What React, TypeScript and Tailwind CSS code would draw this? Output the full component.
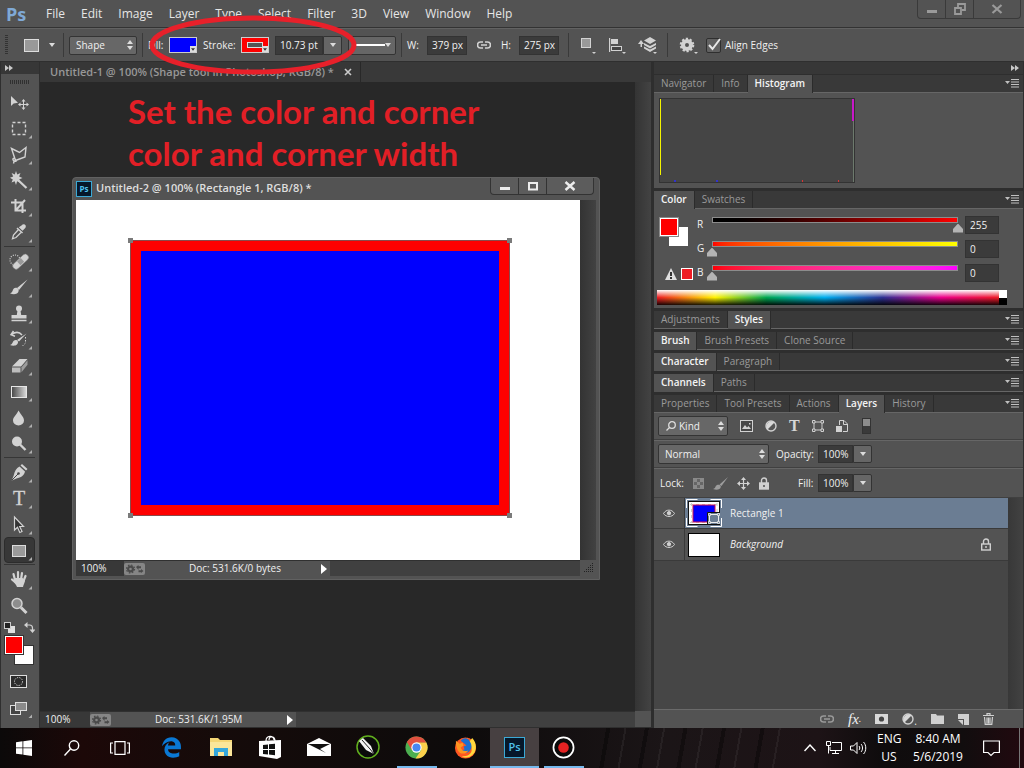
import type { ReactNode } from "react"
import { FaEdgeLegacy } from "react-icons/fa6"

const GRAY = "#d2d2d2"

const menus = ["File", "Edit", "Image", "Layer", "Type", "Select", "Filter", "3D", "View", "Window", "Help"]

type Tool = { name: string; icon: ReactNode; single?: boolean; active?: boolean }

const marqueeTools: Tool[] = [
  {
    name: "Move",
    single: true,
    icon: (
      <>
        <path d="M7 7v10l2.600-2.600 4.400-.6z" />
        <path d="M19.500 11v9M15 15.500h9" stroke={GRAY} strokeWidth="1" />
        <path d="M19.500 10l2 2.500h-4zM19.500 21l2-2.500h-4zM14 15.500l2.500-2v4zM25 15.500l-2.500-2v4z" />
      </>
    ),
  },
  {
    name: "Rectangular marquee",
    icon: <rect x="8.500" y="7.500" width="13" height="12" fill="none" stroke={GRAY} strokeWidth="1.400" strokeDasharray="3 2" />,
  },
  {
    name: "Lasso",
    icon: (
      <path d="M7.500 7.500l8 4 6.500-5-1 9.500-9.500 3.500zM11.500 18c-2-1.500-3.500 0-2 1.500s3 1 3-.5M10 20.500l-.5 2" fill="none" stroke={GRAY} strokeWidth="1.400" />
    ),
  },
  {
    name: "Magic wand",
    icon: (
      <>
        <path d="M12 4l1.200 3.600L16.500 6l-1.400 3.400L18.500 11l-3.400 1.400 1 3-3-1.200L12 18l-1.300-3.800-3.200 1.200 1.300-3L6 10.800l3.200-1.400L7.600 6l3.200 1.500z" />
        <path d="M14 13l8.500 8" stroke={GRAY} strokeWidth="2.200" />
      </>
    ),
  },
  {
    name: "Crop",
    icon: (
      <path d="M11.500 6v11.500H22M7 9.500h11.500V20M12 17l9-10" fill="none" stroke={GRAY} strokeWidth="2" />
    ),
  },
  {
    name: "Eyedropper",
    icon: (
      <>
        <path d="M17.500 6.500c2-2.500 5.500-.5 4 2.200l-3 3-3.700-3.500zM13.500 8.500l5.500 5-1 1-5.500-5z" />
        <path d="M14.500 10.500L9.500 16l-1 3.800 3.500-1.300 5-5" fill="none" stroke={GRAY} strokeWidth="1.300" />
      </>
    ),
  },
]

const paintTools: Tool[] = [
  {
    name: "Spot healing brush",
    icon: (
      <>
        <circle cx="11" cy="12" r="5" fill="none" stroke={GRAY} strokeWidth="1.200" strokeDasharray="1 1.300" />
        <rect x="7" y="10.500" width="19" height="6.500" rx="3" transform="rotate(-43 16.500 13.500)" stroke="#777" strokeWidth="0.500" />
        <rect x="14" y="11.200" width="5" height="5" transform="rotate(-43 16.500 13.500)" fill="#999" />
      </>
    ),
  },
  {
    name: "Brush",
    icon: (
      <>
        <path d="M23.500 5.500L15 16l-2-2z" />
        <path d="M12.500 13.800c2 .6 3 2.500 1.500 4.700s-5.500 2-8 .8c2-.5 2.300-1.700 3-3.500.6-1.600 2-2.400 3.500-2z" />
      </>
    ),
  },
  {
    name: "Clone stamp",
    icon: (
      <>
        <circle cx="15" cy="8.500" r="3" />
        <path d="M13.600 10h2.800l.8 5h5.300v3.500h-15V15h5.300zM7.500 19.800h15v1.400h-15z" />
      </>
    ),
  },
  {
    name: "History brush",
    icon: (
      <>
        <path d="M7.500 8.500c5-3.500 8-2.500 10.500.5M9.500 5L7 8.700l4 1.500" fill="none" stroke={GRAY} strokeWidth="1.500" />
        <path d="M22.500 7.500L15 15.500l-2-1.500zM12.500 14c2 1 2 3 .5 4.500s-4.500 1.500-7 .5c2-.5 2-1.500 3-3.200.8-1.500 2-2.200 3.500-1.800z" />
        <path d="M21.500 11v6l-3 3" fill="none" stroke={GRAY} strokeDasharray="1.500 1.500" />
      </>
    ),
  },
  {
    name: "Eraser",
    icon: (
      <>
        <path d="M8 14.500L15.500 7h8L17 14.500z" />
        <path d="M8 15.500h8.500v5H8z" fill="#bdbdbd" />
        <path d="M17.500 15.200l6-7v4.500l-6 7.500z" fill="#9c9c9c" />
      </>
    ),
  },
  {
    name: "Gradient",
    icon: (
      <>
        <defs>
          <linearGradient id="ramp">
            <stop offset="0" stopColor="#444" />
            <stop offset="1" stopColor="#ddd" />
          </linearGradient>
        </defs>
        <rect x="7.500" y="8.500" width="15" height="11" fill="url(#ramp)" stroke="#e6e6e6" />
      </>
    ),
  },
  {
    name: "Blur",
    icon: <path d="M14.500 6.500c2.500 4.500 5.500 6.500 5.500 10a5.500 5 0 0 1-11 0c0-3.500 3.500-5.500 5.500-10z" />,
  },
  {
    name: "Dodge",
    icon: (
      <>
        <circle cx="13" cy="11.500" r="5" />
        <path d="M16 14.500l5.500 5.500" stroke={GRAY} strokeWidth="2.400" />
      </>
    ),
  },
]

const vectorTools: Tool[] = [
  {
    name: "Pen",
    icon: (
      <>
        <path d="M18 5l5.500 5-1.500 1.500-5.500-5zM15.500 7.500l5.500 5c-1 4-4 6-8.500 7l-4.800 2 2-5c1-4.500 2.500-7.500 5.800-9z" />
        <path d="M8 21l6-6" stroke="#444" />
        <circle cx="14.500" cy="14.500" r="1.300" fill="#444" />
      </>
    ),
  },
  {
    name: "Type",
    icon: (
      <text x="15" y="20" textAnchor="middle" fontFamily="Liberation Serif, serif" fontSize="20" stroke={GRAY} strokeWidth="0.300">
        T
      </text>
    ),
  },
  {
    name: "Path selection",
    icon: (
      <path d="M10.500 6v13l3-2.800 2.300 5.300 2.200-1-2.300-5h3.800z" fill="#333" stroke={GRAY} strokeWidth="1.200" />
    ),
  },
  {
    name: "Rectangle",
    active: true,
    icon: <rect x="8.500" y="8.500" width="13" height="11" fill="#9a9a9a" stroke="#dcdcdc" />,
  },
]

const viewTools: Tool[] = [
  {
    name: "Hand",
    icon: (
      <>
        <path d="M11 14L9.500 8M14 13V6M17 13.500l1-6.500M19.500 15l2-5M11.500 16.500L8 13.500" stroke={GRAY} strokeWidth="2.200" strokeLinecap="round" />
        <path d="M10.500 12h8l2.500 2.500c-.5 3-1.500 4-2 6.500h-6c-.5-2-2-3-3-5z" />
      </>
    ),
  },
  {
    name: "Zoom",
    single: true,
    icon: (
      <>
        <circle cx="13" cy="11.500" r="5" fill="#8d8d8d" stroke={GRAY} strokeWidth="1.500" />
        <path d="M17 15.500l5.500 5.500" stroke={GRAY} strokeWidth="3" />
      </>
    ),
  },
]

function ToolGroup({ tools }: { tools: Tool[] }) {
  return (
    <div className="flex flex-col">
      {tools.map((t) => (
        <button
          key={t.name}
          type="button"
          aria-label={t.name}
          className={t.active ? "h-[26px] rounded-sm border border-[#2c2c2c] bg-[#373737]" : "h-[26px] border border-transparent"}
        >
          <svg viewBox="1 1 30 24" className="h-6 w-[30px]" fill={GRAY}>
            {t.icon}
            {!t.single && <path d="M28 20v3.500h-3.500z" fill="#b0b0b0" />}
          </svg>
        </button>
      ))}
    </div>
  )
}

function Rule() {
  return <div className="my-px h-px bg-[#363636]" />
}

function Divider() {
  return <div className="mx-[5px] h-6 w-px shrink-0 bg-[#3a3a3a]" />
}

function Ps({ className }: { className: string }) {
  return (
    <span className={`flex items-center justify-center border border-[#3ba9d6] bg-[#06182a] text-[#4fc3ee] ${className}`}>
      Ps
    </span>
  )
}

function Stepper() {
  return (
    <svg viewBox="0 0 6 10" className="pointer-events-none absolute right-1 h-2.5 w-1.5" fill="#ddd">
      <path d="M3 0l3 4H0zM3 10l3-4H0z" />
    </svg>
  )
}

function Down() {
  return (
    <svg viewBox="0 0 6 4" className="h-1 w-1.5" fill="#dcdcdc">
      <path d="M0 0h6L3 4z" />
    </svg>
  )
}

function FastForward() {
  return (
    <svg viewBox="0 0 8 6" className="h-1.5 w-2" fill="#c8c8c8">
      <path d="M0 0l4 3-4 3zM4 0l4 3-4 3z" />
    </svg>
  )
}

function LinkIcon({ color }: { color: string }) {
  return (
    <svg viewBox="0 0 14 8" className="h-2 w-3.5" fill="none" stroke={color} strokeWidth="1.600">
      <path d="M6 1H3.500a2.700 2.700 0 0 0 0 6H6M8 1h2.500a2.700 2.700 0 0 1 0 6H8M4 4h6" />
    </svg>
  )
}

function MenuBar() {
  return (
    <header className="flex h-7 shrink-0 items-center border-b border-[#333] bg-[#535353]">
      <span className="w-[38px] pl-1.5 font-['Open_Sans',sans-serif] text-lg font-bold text-[#7fa9d6]">Ps</span>
      <nav className="flex flex-1 text-[12px] text-[#e6e6e6]">
        {menus.map((m) => (
          <button key={m} type="button" className="px-2">
            {m}
          </button>
        ))}
      </nav>
      <div className="mr-[3px] flex h-[19px] self-start rounded-b-sm border border-t-0 border-[#3a3a3a] text-[#9a9a9a]">
        <button type="button" aria-label="Minimize" className="flex w-7 items-center justify-center border-r border-[#3a3a3a]">
          <svg viewBox="0 0 12 12" className="size-3" fill="currentColor">
            <path d="M1 7h10v3H1z" />
          </svg>
        </button>
        <button type="button" aria-label="Restore" className="flex w-7 items-center justify-center border-r border-[#3a3a3a]">
          <svg viewBox="0 0 12 12" className="size-3" fill="none" stroke="currentColor" strokeWidth="1.800">
            <path d="M4 4V1h7v6H8M1 5h6v6H1z" />
          </svg>
        </button>
        <button type="button" aria-label="Close" className="flex w-[46px] items-center justify-center">
          <svg viewBox="0 0 12 12" className="size-3" stroke="currentColor" strokeWidth="2.200">
            <path d="M1.500 2l9 8M10.500 2l-9 8" />
          </svg>
        </button>
      </div>
    </header>
  )
}

function SwatchArrow() {
  return (
    <span className="absolute bottom-0 right-0 flex size-1.5 items-center justify-center bg-[#ddd]">
      <svg viewBox="0 0 6 4" className="h-[3px] w-1" fill="#333">
        <path d="M0 0h6L3 4z" />
      </svg>
    </span>
  )
}

function OptionsBar() {
  return (
    <div className="flex h-[34px] shrink-0 items-center border-b border-t border-b-[#2f2f2f] border-t-[#626262] bg-[#535353] text-[10px] text-[#f0f0f0]">
      <div className="ml-[5px] h-5 w-[3px] bg-[repeating-linear-gradient(#333_0_1px,transparent_1px_2px)]" />
      <button type="button" aria-label="Tool preset" className="ml-4 mr-[3px] flex items-center gap-2.5">
        <span className="h-[13px] w-[15px] border border-[#ddd] bg-[#999]" />
        <Down />
      </button>
      <Divider />
      <div className="relative flex w-[68px] items-center">
        <select aria-label="Tool mode" className="h-[19px] w-full appearance-none rounded-xs border border-[#343434] bg-[#676767] pl-1.5">
          <option>Shape</option>
        </select>
        <Stepper />
      </div>
      <Divider />
      <span className="w-[21px]">Fill:</span>
      <button type="button" aria-label="Fill color" className="relative h-4 w-7 border border-[#ccc] bg-[#0000fe]">
        <SwatchArrow />
      </button>
      <span className="ml-1.5 w-[38px]">Stroke:</span>
      <button type="button" aria-label="Stroke color" className="relative flex h-4 w-7 items-center justify-center border border-[#ccc] bg-[#fe0000]">
        <span className="h-1.5 w-4 border border-[#ddd] bg-[#555]" />
        <SwatchArrow />
      </button>
      <input aria-label="Stroke width" defaultValue="10.73 pt" className="ml-1.5 h-[19px] w-12 border border-[#333] bg-[#3b3b3b] pl-1" />
      <button type="button" aria-label="Stroke width list" className="flex h-[19px] w-[19px] items-center justify-center rounded-r-xs border border-[#333] bg-[#666]">
        <Down />
      </button>
      <button type="button" aria-label="Stroke type" className="ml-1.5 flex h-[19px] w-12 items-center justify-between rounded-xs border border-[#333] bg-[#666] px-1">
        <span className="h-0.5 w-8 bg-white" />
        <Down />
      </button>
      <Divider />
      <label htmlFor="w" className="w-5">W:</label>
      <input id="w" defaultValue="379 px" className="h-[19px] w-10 border border-[#333] bg-[#3b3b3b] pl-1" />
      <button type="button" aria-label="Link width and height" className="mx-2.5">
        <LinkIcon color={GRAY} />
      </button>
      <label htmlFor="h" className="w-[18px]">H:</label>
      <input id="h" defaultValue="275 px" className="mr-1 h-[19px] w-10 border border-[#333] bg-[#3b3b3b] pl-1" />
      <Divider />
      <button type="button" aria-label="Path operations" className="ml-1.5 w-7">
        <svg viewBox="0 0 18 20" className="h-5 w-[18px]" fill={GRAY}>
          <rect x="1.500" y="3.500" width="9" height="9" fill="#999" stroke={GRAY} />
          <path d="M12 17h4l-2 2z" />
        </svg>
      </button>
      <button type="button" aria-label="Path alignment" className="w-[30px]">
        <svg viewBox="0 0 18 20" className="h-5 w-[18px]" fill={GRAY}>
          <path d="M1 3h1.200v14H1zM3 4h7v5H3zM14 17h4l-2 2z" />
          <rect x="3.500" y="11.500" width="10" height="4" fill="#444" stroke={GRAY} />
        </svg>
      </button>
      <button type="button" aria-label="Path arrangement" className="w-6">
        <svg viewBox="0 0 20 20" className="size-5" fill={GRAY}>
          <path d="M12 2l6 3.500-6 3.500-6-3.500zM6 8l6 3 6-3v2l-6 3.500L6 10zM6 11.500l6 3 6-3v2L12 17l-6-3.500zM0 9l3-4 3 4H4v3H2.500V9zM15 17h4l-2 2z" />
        </svg>
      </button>
      <Divider />
      <button type="button" aria-label="Geometry options" className="ml-1.5 w-6">
        <svg viewBox="0 0 20 20" className="size-5" fill={GRAY}>
          <circle cx="8" cy="10" r="4" fill="none" stroke={GRAY} strokeWidth="4" />
          <circle cx="8" cy="10" r="6.200" fill="none" stroke={GRAY} strokeWidth="2.200" strokeDasharray="2.200 1.700" />
          <path d="M15 17h4l-2 2z" />
        </svg>
      </button>
      <label className="relative ml-[3px] flex items-center gap-1">
        <input type="checkbox" defaultChecked className="size-[15px] appearance-none rounded-xs border border-[#2f2f2f] bg-[#616161]" />
        <svg viewBox="0 0 16 16" className="pointer-events-none absolute left-0 size-4" fill="none" stroke="#e8e8e8" strokeWidth="2">
          <path d="M3 8l3.500 4L14 2" />
        </svg>
        Align Edges
      </label>
    </div>
  )
}

function ToolPanel() {
  return (
    <aside className="flex w-10 shrink-0 flex-col border-x border-[#2f2f2f] bg-[#535353]">
      <div className="flex h-3 items-center bg-[#373737] pl-1">
        <FastForward />
      </div>
      <div className="flex h-[15px] items-center justify-center">
        <div className="h-1 w-5 bg-[repeating-linear-gradient(90deg,#303030_0_1px,transparent_1px_2px)]" />
      </div>
      <div className="flex w-[34px] flex-col pl-[3px]">
        <ToolGroup tools={marqueeTools} />
        <Rule />
        <ToolGroup tools={paintTools} />
        <Rule />
        <ToolGroup tools={vectorTools} />
        <Rule />
        <ToolGroup tools={viewTools} />
        <div className="flex h-[18px] items-center justify-between">
          <button type="button" aria-label="Default colors">
            <svg viewBox="0 0 11 11" className="size-[11px]">
              <path d="M4 4h7v7H4z" fill="#e0e0e0" />
              <rect x="0.500" y="0.500" width="6" height="6" fill="#222" stroke="#ccc" />
            </svg>
          </button>
          <button type="button" aria-label="Swap colors">
            <svg viewBox="0 0 11 11" className="size-[11px]" fill={GRAY}>
              <path d="M2.500 3h3c2 0 3 1 3 3v2" fill="none" stroke={GRAY} strokeWidth="1.200" />
              <path d="M0 3l3.500-3v6zM5.500 7.500h6L8.500 11z" />
            </svg>
          </button>
        </div>
        <div className="relative h-[30px]">
          <button type="button" aria-label="Background color" className="absolute left-[10px] top-[9px] size-5 border border-[#333] bg-white" />
          <button type="button" aria-label="Foreground color" className="absolute left-px top-0 size-[18px] border border-white bg-[#fe0000] outline outline-[#333]" />
        </div>
        <button type="button" aria-label="Quick mask" className="mt-1 h-6">
          <svg viewBox="0 0 31 24" className="h-6 w-[31px]">
            <rect x="6.500" y="5.500" width="16" height="12" fill="#2c2c2c" stroke="#ddd" />
            <circle cx="14.500" cy="11.500" r="4" fill="none" stroke="#ddd" strokeDasharray="1.200 1.200" />
          </svg>
        </button>
        <button type="button" aria-label="Screen mode" className="mt-[3px] h-6">
          <svg viewBox="0 0 31 24" className="h-6 w-[31px]">
            <rect x="6.500" y="8.500" width="10" height="9" fill="#444" stroke="#ddd" />
            <rect x="11.500" y="5.500" width="11" height="8" fill="#8b8b8b" stroke="#ddd" />
            <path d="M28 17.500V21h-3.500z" fill="#b0b0b0" />
          </svg>
        </button>
      </div>
    </aside>
  )
}

function StatusBar({ zoom, doc, className }: { zoom: string; doc: string; className: string }) {
  return (
    <div className="flex h-4 items-stretch border-t border-[#303030] bg-[#404040] text-[10px] text-[#f0f0f0]">
      <span className={`flex items-center bg-[#383838] pl-[5px] ${className}`}>{zoom}</span>
      <div className="flex w-[206px] items-center bg-[#535353]">
        <button type="button" aria-label="Cloud sync" className="flex h-3 w-[21px] items-center justify-center rounded-xs bg-[#858585]">
          <svg viewBox="0 0 18 10" className="h-2.5 w-[18px]" fill="#4a4a4a">
            <circle cx="4.500" cy="5" r="2.400" fill="none" stroke="#4a4a4a" strokeWidth="2.200" />
            <circle cx="4.500" cy="5" r="4" fill="none" stroke="#4a4a4a" strokeWidth="1.200" strokeDasharray="1.600 1.540" />
            <path d="M10 3l2.500-2v1.300H15v2h-2.500V6zM17.500 7L15 5v1.300h-2.500v2H15V9z" />
          </svg>
        </button>
        <span className="flex-1 pl-11">{doc}</span>
        <svg viewBox="0 0 6 10" className="mr-[3px] h-2.5 w-1.5" fill="#fff">
          <path d="M0 0l6 5-6 5z" />
        </svg>
      </div>
    </div>
  )
}

function DocumentWindow() {
  return (
    <section className="absolute left-8 top-[95px] flex w-[528px] flex-col rounded-t border border-[#616161] bg-[#535353] px-[3px] pb-[3px]">
      <div className="flex h-[22px] items-center">
        <Ps className="size-4 text-[8px] font-bold" />
        <h2 className="ml-1 flex-1 pb-0.5 text-[11px] font-semibold text-[#dedede]">Untitled-2 @ 100% (Rectangle 1, RGB/8) *</h2>
        <div className="mr-0.5 flex h-[17px] self-start rounded-b-sm border border-t-0 border-[#333] bg-[#5c5c5c] text-[#ececec]">
          <button type="button" aria-label="Minimize" className="flex w-7 items-center justify-center border-r border-[#333]">
            <svg viewBox="0 0 12 12" className="size-3" fill="currentColor">
              <path d="M1 7h10v3H1z" />
            </svg>
          </button>
          <button type="button" aria-label="Maximize" className="flex w-7 items-center justify-center border-r border-[#333]">
            <svg viewBox="0 0 12 12" className="size-3" fill="none" stroke="currentColor" strokeWidth="2">
              <path d="M2 3h8v6.500H2z" />
            </svg>
          </button>
          <button type="button" aria-label="Close" className="flex w-[46px] items-center justify-center">
            <svg viewBox="0 0 12 12" className="size-3" stroke="currentColor" strokeWidth="2.400">
              <path d="M1.500 2l9 8M10.500 2l-9 8" />
            </svg>
          </button>
        </div>
      </div>
      <div className="flex h-[360px]">
        <div className="relative flex-1 bg-white">
          <div className="absolute left-[54px] top-10 h-[276px] w-[380px] border border-[#8a4a4a] bg-[#0000fe]">
            <div className="size-full border-[10px] border-[#fe0000]" />
          </div>
          <span className="absolute left-[52px] top-[38px] size-[5px] bg-[#7a7a7a]" />
          <span className="absolute left-[431px] top-[38px] size-[5px] bg-[#7a7a7a]" />
          <span className="absolute left-[52px] top-[313px] size-[5px] bg-[#7a7a7a]" />
          <span className="absolute left-[431px] top-[313px] size-[5px] bg-[#7a7a7a]" />
        </div>
        <div className="w-4 bg-linear-to-r from-[#333] to-[#424242]" />
      </div>
      <div className="flex">
        <div className="flex-1">
          <StatusBar zoom="100%" doc="Doc: 531.6K/0 bytes" className="w-12" />
        </div>
        <svg viewBox="0 0 16 16" className="size-4" fill="#222">
          <path d="M12 3h1v1h-1zM12 5h1v1h-1zM10 5h1v1h-1zM12 7h1v1h-1zM10 7h1v1h-1zM8 7h1v1H8zM12 9h1v1h-1zM10 9h1v1h-1zM8 9h1v1H8zM6 9h1v1H6zM12 11h1v1h-1zM10 11h1v1h-1zM8 11h1v1H8zM6 11h1v1H6zM4 11h1v1H4z" />
        </svg>
      </div>
    </section>
  )
}

function Workspace() {
  return (
    <main className="flex min-w-0 flex-1 flex-col border-b border-[#2f2f2f] bg-[#282828]">
      <div className="flex h-5 shrink-0 bg-[#393939]">
        <div className="flex items-center gap-2 border-r border-[#282828] bg-[#373737] px-2 text-[11px] font-semibold text-[#989898]">
          <span className="px-0.5">Untitled-1 @ 100% (Shape tool in Photoshop, RGB/8) *</span>
          <button type="button" aria-label="Close document">
            <svg viewBox="0 0 8 8" className="size-2" stroke="#ccc" strokeWidth="1.600">
              <path d="M1 1l6 6M7 1L1 7" />
            </svg>
          </button>
        </div>
      </div>
      <div className="flex min-h-0 flex-1">
        <div className="relative min-w-0 flex-1">
          <p className="absolute left-[88px] top-2 whitespace-pre font-['Lato',sans-serif] text-[33px] font-bold leading-[42px] text-[#e21f26]">
            {"Set the color and corner\ncolor and corner width"}
          </p>
          <DocumentWindow />
        </div>
        <div className="w-4 bg-linear-to-r from-[#343434] to-[#434343]" />
      </div>
      <div className="flex bg-[#535353] pr-4">
        <div className="flex-1">
          <StatusBar zoom="100%" doc="Doc: 531.6K/1.95M" className="w-[50px]" />
        </div>
      </div>
    </main>
  )
}

function Tabs({ tabs, active }: { tabs: string[]; active: string }) {
  return (
    <div className="flex h-[18px] shrink-0 items-stretch border-b border-[#666] bg-[#393939] text-[10px]">
      <div role="tablist" className="flex flex-1">
        {tabs.map((t) => (
          <button
            key={t}
            type="button"
            role="tab"
            aria-selected={t === active}
            className={
              t === active
                ? "-mb-px border-r border-[#2b2b2b] bg-[#535353] px-[7px] pb-0.5 font-semibold text-[#f4f4f4]"
                : "border-r border-[#2b2b2b] px-[7px] font-medium text-[#9a9a9a]"
            }
          >
            {t}
          </button>
        ))}
      </div>
      <button type="button" aria-label="Panel menu" className="mr-1">
        <svg viewBox="0 0 14 9" className="h-[9px] w-3.5" fill="#c0c0c0">
          <path d="M0 2h5L2.500 5zM6 0h8v1H6zM6 2.500h8v1H6zM6 5h8v1H6zM6 7.500h8v1H6z" />
        </svg>
      </button>
    </div>
  )
}

function HistogramPanel() {
  return (
    <div className="h-[95px] px-[5px] py-[5px]">
      <svg viewBox="0 0 196 85" className="h-[85px] w-[196px]">
        <rect x="0.500" y="0.500" width="195" height="84" fill="#454545" stroke="#333" />
        <path d="M1 1h1v76H1z" fill="#f4f400" />
        <path d="M193 1h2v22h-2z" fill="#c818c8" />
        <path d="M194 23h1v61h-1z" fill="#6d7a6d" />
        <path d="M15 82h2v2h-2zM57 82h2v2h-2z" fill="#33c" />
        <path d="M143 82h1v2h-1zM179 82h1v2h-1z" fill="#d33" />
      </svg>
    </div>
  )
}

const channels = [
  { name: "R", value: 255, ramp: "bg-linear-to-r from-black to-[#f00]" },
  { name: "G", value: 0, ramp: "bg-linear-to-r from-[#f00] to-[#ff0]" },
  { name: "B", value: 0, ramp: "bg-linear-to-r from-[#f00] to-[#f0f]" },
]

function ColorPanel() {
  return (
    <div className="flex h-[99px] flex-col pl-[3px] pr-4 pt-[7px] text-[10px] text-[#f0f0f0]">
      <div className="flex">
        <div className="flex w-10 flex-col justify-between pb-2">
          <div className="relative h-8">
            <button type="button" aria-label="Background" className="absolute left-3 top-[11px] size-[19px] bg-white" />
            <button type="button" aria-label="Foreground" className="absolute left-[3px] top-0.5 size-[18px] border border-white bg-[#fe0000] outline outline-[#888]" />
          </div>
          <div className="flex items-center justify-end gap-1 pr-1">
            <svg viewBox="0 0 12 12" className="size-3">
              <path d="M6 0l6 12H0z" fill="#e0e0e0" />
              <path d="M5 4h2v4H5zM5 9h2v2H5z" fill="#333" />
            </svg>
            <span className="size-3 border border-white bg-[#ee1c24]" />
          </div>
        </div>
        <div className="flex flex-1 flex-col">
          {channels.map((c) => (
            <div key={c.name} className="flex h-6">
              <label htmlFor={`ch-${c.name}`} className="h-[18px] w-2 text-[10px] leading-4">
                {c.name}
              </label>
              <div className="flex min-w-0 flex-1 flex-col">
                <div className={`mx-[7px] mt-px h-1.5 border border-[#8c8c8c] ${c.ramp}`} />
                <input
                  type="range"
                  min="0"
                  max="255"
                  defaultValue={c.value}
                  aria-label={`${c.name} slider`}
                  className="h-2.5 w-full appearance-none bg-transparent px-0.5 [&::-webkit-slider-thumb]:h-[9px] [&::-webkit-slider-thumb]:w-2.5 [&::-webkit-slider-thumb]:appearance-none [&::-webkit-slider-thumb]:bg-[#b4b4b4] [&::-webkit-slider-thumb]:[clip-path:polygon(50%_0,100%_60%,100%_100%,0_100%,0_60%)]"
                />
              </div>
              <input id={`ch-${c.name}`} defaultValue={c.value} className="mr-2 h-[18px] w-[34px] border border-[#333] bg-[#3b3b3b] pl-1" />
            </div>
          ))}
        </div>
      </div>
      <div className="mt-0.5 flex h-[15px]">
        <div className="flex-1 bg-[linear-gradient(to_bottom,rgba(255,255,255,1)_0,rgba(255,255,255,0)_50%,rgba(0,0,0,0)_50%,rgba(0,0,0,0.9)_100%),linear-gradient(to_right,#ed1c24,#fff200_17%,#00a651_32%,#00aeef_49%,#2e3192_66%,#ec008c_83%,#ed1c24)]" />
        <div className="flex w-2 flex-col">
          <div className="flex-1 bg-white" />
          <div className="flex-1 bg-black" />
        </div>
      </div>
    </div>
  )
}

function Percent({ id, label, width }: { id: string; label: string; width: string }) {
  return (
    <div className="flex items-center">
      <label htmlFor={id} className={width}>
        {label}
      </label>
      <input id={id} defaultValue="100%" className="h-[18px] w-[35px] border border-[#333] bg-[#3b3b3b] pl-1" />
      <button type="button" aria-label={`${label} list`} className="flex h-[18px] w-[19px] items-center justify-center rounded-r-xs border border-[#333] bg-[#666]">
        <Down />
      </button>
    </div>
  )
}

function Eye() {
  return (
    <button type="button" aria-label="Toggle visibility" className="flex w-[31px] items-center justify-center border-r border-[#3a3a3a]">
      <svg viewBox="0 0 12 9" className="h-[9px] w-3" fill="none" stroke="#d0d0d0">
        <path d="M0.500 4.500C3 0 9 0 11.500 4.500 9 8.500 3 8.500 0.500 4.500z" />
        <circle cx="6" cy="4.200" r="1.700" fill="#d0d0d0" />
      </svg>
    </button>
  )
}

function Lock({ open }: { open?: boolean }) {
  return (
    <svg viewBox="0 0 10 13" className="h-[13px] w-2.5" fill="none" stroke="#d0d0d0" strokeWidth="1.400">
      <path d="M2.500 6V3.500a2.500 2.500 0 0 1 5 0V6" />
      <rect x="0.700" y="6" width="8.600" height="6" fill={open ? "none" : "#d0d0d0"} />
      <path d="M5 8v2" stroke={open ? "#d0d0d0" : "#444"} />
    </svg>
  )
}

function HalfCircle() {
  return (
    <svg viewBox="0 0 12 12" className="size-3">
      <circle cx="6" cy="6" r="5" fill="#555" stroke="#d0d0d0" strokeWidth="1.400" />
      <path d="M2.500 9.500a5 5 0 0 1 7-7z" fill="#d8d8d8" />
    </svg>
  )
}

function FrameIcon() {
  return (
    <svg viewBox="0 0 12 12" className="size-3" fill="#555" stroke="#d0d0d0">
      <path d="M2 2h8v8H2z" />
      <path d="M0.500 0.500h2.500v2.500h-2.500zM9 0.500h2.500v2.500h-2.500zM0.500 9h2.500v2.500h-2.500zM9 9h2.500v2.500h-2.500z" />
    </svg>
  )
}

function LayersPanel() {
  return (
    <div className="flex min-h-0 flex-1 flex-col text-[10px] text-[#f0f0f0]">
      <div className="flex h-[27px] items-center border-b border-[#404040] pl-1">
        <div className="relative flex w-[70px] items-center">
          <svg viewBox="0 0 10 10" className="pointer-events-none absolute left-2 size-2.5" fill="none" stroke="#ddd" strokeWidth="1.300">
            <circle cx="6" cy="4" r="3.300" />
            <path d="M3.500 6.500L0.500 9.500" />
          </svg>
          <select aria-label="Filter type" className="h-5 w-full appearance-none rounded-xs border border-[#343434] bg-[#676767] pl-5">
            <option>Kind</option>
          </select>
          <Stepper />
        </div>
        <div className="ml-3 flex items-center gap-3">
          <button type="button" aria-label="Filter pixel layers">
            <svg viewBox="0 0 13 12" className="h-3 w-[13px]" fill={GRAY}>
              <rect x="0.500" y="0.500" width="12" height="11" fill="#484848" stroke={GRAY} />
              <path d="M2 9l3-4 2 2.500L8.500 6 11 9zM9 3h1.500v1.500H9z" />
            </svg>
          </button>
          <button type="button" aria-label="Filter adjustment layers">
            <HalfCircle />
          </button>
          <button type="button" aria-label="Filter type layers" className="font-['Liberation_Serif',serif] text-base font-bold leading-4 text-[#d6d6d6]">
            T
          </button>
          <button type="button" aria-label="Filter shape layers">
            <FrameIcon />
          </button>
          <button type="button" aria-label="Filter smart objects">
            <svg viewBox="0 0 12 12" className="size-3" fill={GRAY}>
              <path d="M3.500 5V.5H8L11.500 4v7.500H7M7.500 0.500v4h4" fill="none" stroke={GRAY} />
              <path d="M0 6h6v6H0z" />
            </svg>
          </button>
          <button type="button" aria-label="Filter switch" className="ml-0.5 flex h-4 w-[9px] items-start border border-[#333] bg-[#3a3a3a]">
            <span className="h-[7px] flex-1 bg-[#8c8c8c]" />
          </button>
        </div>
      </div>
      <div className="flex h-7 items-center gap-[7px] border-b border-t border-b-[#404040] border-t-[#666] pl-1">
        <div className="relative flex w-[111px] items-center">
          <select aria-label="Blend mode" className="h-5 w-full appearance-none rounded-xs border border-[#343434] bg-[#676767] pl-1.5">
            <option>Normal</option>
          </select>
          <Stepper />
        </div>
        <Percent id="opacity" label="Opacity:" width="w-[42px]" />
      </div>
      <div className="flex h-[30px] items-center border-b border-t border-b-[#404040] border-t-[#666] pl-1.5">
        <span className="w-[33px]">Lock:</span>
        <div className="flex w-[105px] items-center gap-[9px]">
          <button type="button" aria-label="Lock transparent pixels">
            <svg viewBox="0 0 11 11" className="size-[11px]" fill="#8a8a8a">
              <rect x="0.500" y="0.500" width="10" height="10" fill="#666" stroke="#8a8a8a" />
              <path d="M1 1h3v3H1zM7 1h3v3H7zM4 4h3v3H4zM1 7h3v3H1zM7 7h3v3H7z" />
            </svg>
          </button>
          <button type="button" aria-label="Lock image pixels">
            <svg viewBox="0 0 15 13" className="h-[13px] w-[15px]" fill="#9c9c9c">
              <path d="M15 0L8.500 9 6.500 7.500zM6 7.800c1.500.5 2.500 1.800 1.300 3.500S3 13 0 12c2-.5 2-1.500 2.700-2.800.7-1.200 2-1.700 3.300-1.400z" />
            </svg>
          </button>
          <button type="button" aria-label="Lock position">
            <svg viewBox="0 0 13 13" className="size-[13px]" fill={GRAY}>
              <path d="M6.500 2v9M2 6.500h9" stroke={GRAY} strokeWidth="1.200" />
              <path d="M6.500 0L9 3H4zM6.500 13L9 10H4zM0 6.500L3 4v5zM13 6.500L10 4v5z" />
            </svg>
          </button>
          <button type="button" aria-label="Lock all">
            <Lock />
          </button>
        </div>
        <Percent id="fill" label="Fill:" width="w-5" />
      </div>
      <div className="flex min-h-0 flex-1">
        <ul className="flex flex-1 flex-col bg-[#464646]">
          <li className="flex h-[31px] border-b border-[#3a3a3a] bg-[#535353]">
            <Eye />
            <div className="flex flex-1 items-center gap-2 bg-[#6b7d93] pl-px">
              <svg viewBox="0 0 36 28" className="h-7 w-9">
                <path d="M0.500 9V.5h11M24.500.5h11V9M0.500 19v8.500h11M24.500 27.500h11V19" fill="none" stroke="#fff" />
                <rect x="2.500" y="2.500" width="31" height="23" fill="#fff" stroke="#111" />
                <path d="M4 5.500h28M4 23.500h28M5.500 4v20M31 4v20" stroke="#ccc" strokeDasharray="3 3" />
                <rect x="7" y="6" width="22" height="17" fill="#0000fe" stroke="#d0104c" />
                <path d="M21 13h14v12H21z" fill="#6b7d93" />
                <path d="M21.500 25V13.500H34" fill="none" stroke="#111" />
                <path d="M23.500 15.500h9v8h-9z" fill="none" stroke="#eee" />
                <path d="M22.500 14.500h2v2h-2zM31.500 14.500h2v2h-2zM22.500 22.500h2v2h-2zM31.500 22.500h2v2h-2z" fill="#6b7d93" stroke="#eee" strokeWidth="0.800" />
              </svg>
              Rectangle 1
            </div>
          </li>
          <li className="flex h-8 border-b border-[#3a3a3a] bg-[#535353]">
            <Eye />
            <div className="flex flex-1 items-center gap-2.5 pl-[3px] pr-[17px] italic">
              <span className="h-6 w-8 border border-black bg-white" />
              <span className="flex-1">Background</span>
              <Lock open />
            </div>
          </li>
        </ul>
        <div className="w-[15px] bg-linear-to-r from-[#383838] to-[#424242]" />
      </div>
      <div className="flex h-[19px] shrink-0 items-center justify-end gap-3.5 border-t border-[#6a6a6a] pr-[29px]">
        <LinkIcon color="#999" />
        <button type="button" aria-label="Layer style" className="flex items-end font-['Liberation_Serif',serif] text-[15px] italic leading-4">
          fx<span className="text-[10px]">.</span>
        </button>
        <button type="button" aria-label="Add mask">
          <svg viewBox="0 0 13 10" className="h-2.5 w-[13px]">
            <path d="M0 0h13v10H0z" fill="#d8d8d8" />
            <circle cx="6.500" cy="5" r="2.600" fill="#444" />
          </svg>
        </button>
        <button type="button" aria-label="New adjustment layer" className="flex items-end">
          <HalfCircle />
          <span className="leading-2">.</span>
        </button>
        <button type="button" aria-label="New group">
          <svg viewBox="0 0 13 10" className="h-2.5 w-[13px]" fill="#d0d0d0">
            <path d="M0 0h5l1 1.500h7V10H0z" />
          </svg>
        </button>
        <button type="button" aria-label="New layer">
          <svg viewBox="0 0 11 11" className="size-[11px]" fill="#d0d0d0">
            <path d="M0 0h11v11H6V5H0zM0 6h5v5z" />
          </svg>
        </button>
        <button type="button" aria-label="Delete layer">
          <svg viewBox="0 0 11 12" className="h-3 w-[11px]" fill="none" stroke="#d0d0d0" strokeWidth="1.200">
            <path d="M0 2.500h11M4 2V.6h3V2M1.500 4l.7 7.300h6.600L9.500 4M4 4.500v6M5.500 4.500v6M7 4.500v6" />
          </svg>
        </button>
      </div>
    </div>
  )
}

function Panels() {
  return (
    <aside className="flex w-[373px] shrink-0 flex-col gap-[3px] border-l-[3px] border-r border-[#2e2e2e] bg-[#2e2e2e]">
      <section className="bg-[#535353]">
        <div className="flex h-[13px] items-center justify-end border-b border-[#2e2e2e] bg-[#373737] pr-1">
          <FastForward />
        </div>
        <Tabs tabs={["Navigator", "Info", "Histogram"]} active="Histogram" />
        <HistogramPanel />
      </section>
      <section className="bg-[#535353]">
        <Tabs tabs={["Color", "Swatches"]} active="Color" />
        <ColorPanel />
      </section>
      <Tabs tabs={["Adjustments", "Styles"]} active="Styles" />
      <Tabs tabs={["Brush", "Brush Presets", "Clone Source"]} active="Brush" />
      <Tabs tabs={["Character", "Paragraph"]} active="Character" />
      <Tabs tabs={["Channels", "Paths"]} active="Channels" />
      <section className="flex min-h-0 flex-1 flex-col bg-[#535353]">
        <Tabs tabs={["Properties", "Tool Presets", "Actions", "Layers", "History"]} active="Layers" />
        <LayersPanel />
      </section>
    </aside>
  )
}

const apps = [
  { name: "Edge", icon: <FaEdgeLegacy className="size-[21px] text-[#0a78d4]" /> },
  {
    name: "File Explorer",
    icon: (
      <svg viewBox="0 0 22 20" className="h-5 w-[22px]">
        <path d="M0 1h8l2 2h12v16H0z" fill="#f5d675" />
        <path d="M0 5h22v14H0z" fill="#fbe69a" />
        <path d="M4 19v-8h14v8h-4v-4H8v4z" fill="#35a7dc" />
      </svg>
    ),
  },
  {
    name: "Store",
    icon: (
      <svg viewBox="0 0 22 24" className="h-6 w-[22px]">
        <path d="M7 6C7 0 15 0 15 5M10 5c0-5 6-4 6 1" fill="none" stroke="#fff" strokeWidth="1.200" />
        <path d="M0 6l22-1v17l-4 2-18-3z" fill="#fff" />
        <path d="M4 10l5-.5V14H4zM10 9.300l6-.5V14h-6zM4 15h5v4.500L4 19zM10 15h6v5.300l-6-.7z" fill="#111" />
      </svg>
    ),
  },
  {
    name: "Mail",
    icon: (
      <svg viewBox="0 0 24 20" className="h-5 w-6">
        <path d="M0 7l12-6 12 6v12H0z" fill="#fff" />
        <path d="M1 7l22 0-10 5 6 4z" fill="#111" />
      </svg>
    ),
  },
  {
    name: "CorelDRAW",
    icon: (
      <svg viewBox="0 0 24 24" className="size-6">
        <circle cx="12" cy="12" r="11" fill="#0a0a0a" stroke="#62b01e" strokeWidth="1.500" />
        <path d="M3 6l4-3 8 8 3 8-8-4z" fill="#f4f4f4" />
        <path d="M6 5l8 9M18 19l-4-5" stroke="#222" />
      </svg>
    ),
  },
  {
    name: "Chrome",
    running: true,
    icon: (
      <svg viewBox="0 0 24 24" className="size-[23px]">
        <circle cx="12" cy="12" r="11.500" fill="#4caf50" />
        <path d="M12 6.500h10.100A11.500 11.500 0 0 1 11 23.500L17 14.500z" fill="#fcd04b" />
        <path d="M2 6.300A11.500 11.500 0 0 1 22.200 6.700H12L7.200 14.800z" fill="#e0503f" />
        <circle cx="12" cy="12" r="5.400" fill="#fff" />
        <circle cx="12" cy="12" r="4.200" fill="#4688f1" />
      </svg>
    ),
  },
  {
    name: "Firefox",
    icon: (
      <svg viewBox="0 0 24 24" className="size-[23px]">
        <circle cx="12" cy="12.500" r="11" fill="#ff5722" />
        <path d="M14 1c1 3 0 4 2 5l3-4c5 5 5 13 1 17s-9 4-12 2c8 1 12-4 10-10-1-3-4-5-4-10z" fill="#ffd83d" />
        <path d="M7 5c3-4 8-3 9 0 3 4 3 8 0 11s-8 2-9-1l4-1-1-3 3-1-2-2z" fill="#1d6fd0" />
        <path d="M2 5l4 3 3-1 1 3-3 2c1 4 5 4 8 3-3 5-9 4-11 0S2 8 2 5z" fill="#ff9620" />
      </svg>
    ),
  },
  { name: "Photoshop", running: true, active: true, icon: <Ps className="size-[21px] text-[11px] font-semibold" /> },
  {
    name: "Recorder",
    running: true,
    icon: (
      <svg viewBox="0 0 24 24" className="size-[23px]">
        <circle cx="12" cy="12" r="10.500" fill="#0a0a0a" stroke="#fff" strokeWidth="1.800" />
        <circle cx="12" cy="12" r="5.500" fill="#e32222" />
      </svg>
    ),
  },
]

function Taskbar() {
  return (
    <footer className="flex h-10 shrink-0 items-stretch bg-[linear-gradient(90deg,#0b0909_0,#1c0808_8%,#150b0a_22%,#0d0b0b_45%,#1b1517_65%,#1d1316_80%,#0f0c0d_86%,#110d0e_94%,#22090f_100%)] text-white">
      <button type="button" aria-label="Start" className="flex w-12 items-center justify-center">
        <svg viewBox="0 0 16 16" className="size-4" fill="#fff">
          <path d="M0 2.200l6.500-.9v6.200H0zM7.300 1.200L16 0v7.500H7.300zM0 8.300h6.500v6.300L0 13.700zM7.300 8.300H16V16l-8.700-1.200z" />
        </svg>
      </button>
      <button type="button" aria-label="Search" className="flex w-12 items-center justify-center">
        <svg viewBox="0 0 16 16" className="size-4" fill="none" stroke="#fff" strokeWidth="1.400">
          <circle cx="10" cy="5.500" r="4.700" />
          <path d="M6.500 9L.5 15.500" />
        </svg>
      </button>
      <button type="button" aria-label="Task view" className="flex w-12 items-center justify-center">
        <svg viewBox="0 0 20 14" className="h-3.5 w-5" fill="none" stroke="#fff" strokeWidth="1.200">
          <path d="M5 .6h10v12.800H5zM3 2H.6v10H3M17 2h2.400v10H17" />
        </svg>
      </button>
      <div className="ml-[3px] flex">
        {apps.map((a) => (
          <button
            key={a.name}
            type="button"
            aria-label={a.name}
            className={a.active ? "flex w-[49px] flex-col items-center bg-[#474041]" : "flex w-[49px] flex-col items-center"}
          >
            <span className="flex flex-1 items-center">{a.icon}</span>
            <span className={a.active ? "h-0.5 w-full bg-[#76b9ed]" : a.running ? "h-0.5 w-10 bg-[#76b9ed]" : "h-0.5"} />
          </button>
        ))}
      </div>
      {/* faint plaid of the wallpaper behind the bar */}
      <div className="mr-4 flex-1 bg-[repeating-linear-gradient(100deg,transparent_0_18px,rgba(0,0,0,0.35)_18px_22px,transparent_22px_36px,rgba(255,255,255,0.05)_36px_38px)]" />
      <div className="flex items-center text-center text-[12px] leading-[18px]">
        <svg viewBox="0 0 12 8" className="h-2 w-3" fill="none" stroke="#fff" strokeWidth="1.400">
          <path d="M.5 7L6 1l5.500 6" />
        </svg>
        <svg viewBox="0 0 16 14" className="ml-2.5 h-3.5 w-4" fill="none" stroke="#fff">
          <path d="M6 1.500h9.500v8H4V6M9.500 9.500v3M6 12.500h7M.5.500h4v4h-4zM2.500 4.500v8" />
        </svg>
        <svg viewBox="0 0 17 14" className="ml-2 h-3.5 w-[17px]" fill="none" stroke="#fff">
          <path d="M.5 5h3L7 1.500v11L3.500 9h-3zM9 5c1 1 1 3 0 4M11 3c2 2 2 6 0 8M13.500 1c3 3 3 9 0 12" />
        </svg>
        <span className="ml-2.5 w-6">ENG US</span>
        <time className="ml-3 w-[50px] whitespace-nowrap">
          8:40 AM
          <br />
          5/6/2019
        </time>
        <button type="button" aria-label="Notifications" className="ml-5">
          <svg viewBox="0 0 17 17" className="size-[17px]" fill="none" stroke="#fff" strokeWidth="1.200">
            <path d="M.6 1h15.800v11.500H11L8 15.500 5 12.500H.6z" />
          </svg>
        </button>
        <div className="ml-[19px] mr-1 h-10 w-px bg-[#777]" />
      </div>
    </footer>
  )
}

export default function App() {
  return (
    <div className="relative flex h-screen flex-col overflow-hidden bg-[#282828] font-['Open_Sans',sans-serif]">
      <MenuBar />
      <OptionsBar />
      <div className="flex min-h-0 flex-1">
        <ToolPanel />
        <Workspace />
        <Panels />
      </div>
      <Taskbar />
      {/* hand-drawn highlight around fill and stroke */}
      <svg viewBox="0 0 210 60" className="pointer-events-none absolute left-[148px] top-[15px] h-[60px] w-[210px]" fill="none">
        <ellipse cx="105" cy="30" rx="101" ry="27" stroke="#e8202a" strokeWidth="5" />
      </svg>
    </div>
  )
}
